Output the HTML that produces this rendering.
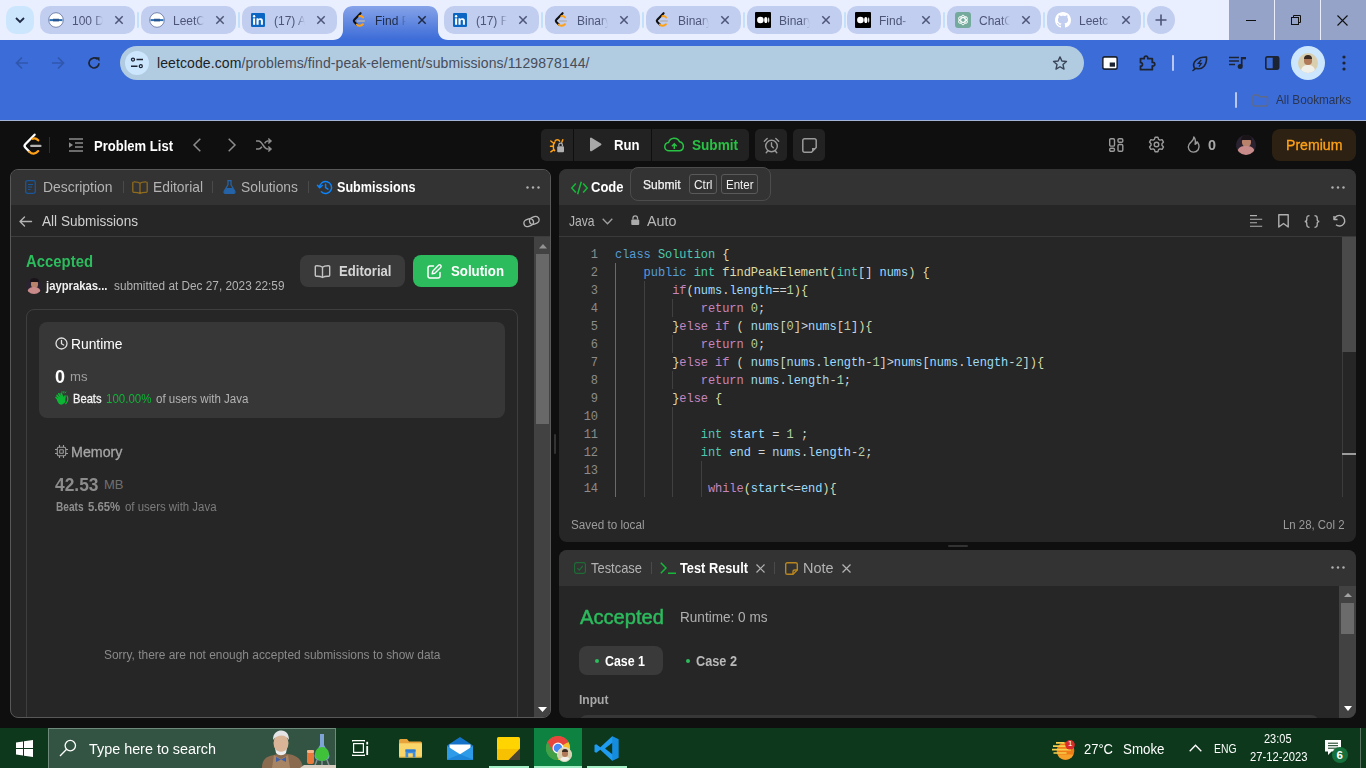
<!DOCTYPE html>
<html lang="en">
<head>
<meta charset="utf-8">
<title>Find Peak Element - LeetCode</title>
<style>
*{box-sizing:border-box;margin:0;padding:0}
html,body{width:1366px;height:768px;overflow:hidden;background:#0f0f0f}
body{position:relative;font-family:"Liberation Sans",sans-serif;color:#f5f5f5;font-size:14px}
.abs{position:absolute}
.t{position:absolute;white-space:nowrap;line-height:1}
svg{position:absolute;overflow:visible}
/* chrome */
#tabstrip{position:absolute;left:0;top:0;width:1366px;height:40px;background:#e9efff}
.tab{position:absolute;top:6px;width:95px;height:28px;border-radius:10px;background:#c2cef0}
.tab .ttl{position:absolute;left:32px;top:8px;font-size:12px;color:#4d5677;white-space:nowrap;width:31px;overflow:hidden;line-height:15px;-webkit-mask-image:linear-gradient(90deg,#000 72%,transparent 100%);mask-image:linear-gradient(90deg,#000 72%,transparent 100%)}
.tab .x{position:absolute;left:72px;top:9px;width:10px;height:10px}
.tsep{position:absolute;top:12px;width:2px;height:16px;background:#c3e1fa;border-radius:1px}
#toolbar{position:absolute;left:0;top:40px;width:1366px;height:80px;background:#3c6cd8}
#wc{position:absolute;left:1229px;top:0;width:137px;height:40px;background:#95a3c8}

/* leetcode */
.g{color:#2cbb5d}
.btn{position:absolute;top:129px;height:32px;background:#222}
.sep{position:absolute;width:1px;height:12px;background:#4a4a4a}

.panel{position:absolute;background:#262626;border-radius:8px;overflow:hidden}
.phead{position:absolute;left:0;top:0;right:0;height:36px;background:#333}

.code{position:absolute;left:615px;white-space:pre;font-family:"Liberation Mono",monospace;font-size:12px;letter-spacing:-.054px;line-height:18px;height:18px;color:#d4d4d4}
.ln{position:absolute;left:560px;width:38px;text-align:right;font-family:"Liberation Mono",monospace;font-size:12px;letter-spacing:-.054px;line-height:18px;height:18px;color:#8c8c8c}
.k{color:#569cd6}.ty{color:#4ec9b0}.c{color:#c586c0}.v{color:#9cdcfe}.f{color:#dcdcaa}.n{color:#b5cea8}.b{color:#dcdcaa}
.ig{position:absolute;width:1px;background:#404040}
</style>
</head>
<body>
<div id="tabstrip">
<div class="abs" style="left:6px;top:6px;width:28px;height:28px;border-radius:10px;background:#cce6fd"></div>
<svg width="10" height="6" viewBox="0 0 10 6" style="left:15px;top:17px"><path d="M1 1l4 4 4-4" fill="none" stroke="#1f2a44" stroke-width="1.800"/></svg>
<div class="tab" style="left:40px"><svg width="16" height="16" viewBox="0 0 16 16" style="left:8px;top:6px"><circle cx="8" cy="8" r="7.3" fill="#fff" stroke="#5b6f9a" stroke-width="0.8"/><rect x="1.5" y="7.1" width="13" height="2" fill="#2d6fb3"/><rect x="5" y="6.6" width="6" height="3" fill="#1f3f77" opacity=".55"/></svg><span class="ttl">100 D</span><svg class="x" viewBox="0 0 10 10" style="left:74px;top:9px" width="10" height="10"><path d="M1.300 1.300l7.400 7.400M8.700 1.300l-7.400 7.400" stroke="#4d5677" stroke-width="1.500" fill="none"/></svg></div>
<div class="tsep" style="left:137px"></div>
<div class="tab" style="left:141px"><svg width="16" height="16" viewBox="0 0 16 16" style="left:8px;top:6px"><circle cx="8" cy="8" r="7.3" fill="#fff" stroke="#5b6f9a" stroke-width="0.8"/><rect x="1.5" y="7.1" width="13" height="2" fill="#2d6fb3"/><rect x="5" y="6.6" width="6" height="3" fill="#1f3f77" opacity=".55"/></svg><span class="ttl">LeetC</span><svg class="x" viewBox="0 0 10 10" style="left:74px;top:9px" width="10" height="10"><path d="M1.300 1.300l7.400 7.400M8.700 1.300l-7.400 7.400" stroke="#4d5677" stroke-width="1.500" fill="none"/></svg></div>
<div class="tsep" style="left:238px"></div>
<div class="tab" style="left:242px"><svg width="14" height="14" viewBox="0 0 16 16" style="left:9px;top:7px"><rect width="16" height="16" rx="1.5" fill="#0a66c2"/><rect x="2.4" y="6.1" width="2.3" height="7.4" fill="#fff"/><circle cx="3.55" cy="3.7" r="1.35" fill="#fff"/><path d="M6.3 6.1h2.2v1c.4-.7 1.2-1.2 2.4-1.2 2.2 0 2.7 1.400 2.700 3.300v4.300h-2.300v-3.800c0-.9 0-1.900-1.200-1.900s-1.400.9-1.400 1.900v3.800H6.300z" fill="#fff"/></svg><span class="ttl">(17) A</span><svg class="x" viewBox="0 0 10 10" style="left:74px;top:9px" width="10" height="10"><path d="M1.300 1.300l7.400 7.400M8.700 1.300l-7.400 7.400" stroke="#4d5677" stroke-width="1.500" fill="none"/></svg></div>
<svg width="116" height="34" viewBox="0 0 116 34" style="left:333px;top:6px"><defs><linearGradient id="ag" x1="0" y1="0" x2="0" y2="1"><stop offset="0" stop-color="#86a3e9"/><stop offset="1" stop-color="#3c6cd8"/></linearGradient></defs><path d="M0 34C6 34 10 30 10 24V10C10 4 14 0 20 0H95C101 0 105 4 105 10V24C105 30 109 34 115 34Z" fill="url(#ag)"/></svg>
<div class="tab" style="left:343px;background:none"><svg width="16" height="16" viewBox="0 0 16 16" style="left:8px;top:6px"><path d="M9.600 1.200 3.300 7.800a1.500 1.500 0 0 0 0 2.100l2.600 2.700" fill="none" stroke="#111" stroke-width="2.100" stroke-linecap="round"/><path d="M8.400 4.300c1.400-.5 2.600 0 3.600 1.100M5.900 12.600c1.700 1.800 4.300 1.500 6-.3" fill="none" stroke="#ffa116" stroke-width="2" stroke-linecap="round"/><path d="M6.700 9h6.600" stroke="#b3b3b3" stroke-width="1.600" stroke-linecap="round"/></svg><span class="ttl" style="color:#1f2a44">Find P</span><svg class="x" viewBox="0 0 10 10" style="left:74px;top:9px" width="10" height="10"><path d="M1.300 1.300l7.400 7.400M8.700 1.300l-7.400 7.400" stroke="#1f2a44" stroke-width="1.500" fill="none"/></svg></div>
<div class="tab" style="left:444px"><svg width="14" height="14" viewBox="0 0 16 16" style="left:9px;top:7px"><rect width="16" height="16" rx="1.5" fill="#0a66c2"/><rect x="2.4" y="6.1" width="2.3" height="7.4" fill="#fff"/><circle cx="3.55" cy="3.7" r="1.35" fill="#fff"/><path d="M6.3 6.1h2.2v1c.4-.7 1.2-1.2 2.4-1.2 2.2 0 2.7 1.400 2.700 3.300v4.300h-2.300v-3.800c0-.9 0-1.900-1.200-1.900s-1.400.9-1.400 1.900v3.800H6.300z" fill="#fff"/></svg><span class="ttl">(17) F</span><svg class="x" viewBox="0 0 10 10" style="left:74px;top:9px" width="10" height="10"><path d="M1.300 1.300l7.400 7.400M8.700 1.300l-7.400 7.400" stroke="#4d5677" stroke-width="1.500" fill="none"/></svg></div>
<div class="tsep" style="left:541px"></div>
<div class="tab" style="left:545px"><svg width="16" height="16" viewBox="0 0 16 16" style="left:8px;top:6px"><path d="M9.600 1.200 3.300 7.800a1.500 1.500 0 0 0 0 2.100l2.600 2.700" fill="none" stroke="#111" stroke-width="2.100" stroke-linecap="round"/><path d="M8.400 4.300c1.400-.5 2.600 0 3.600 1.100M5.900 12.600c1.700 1.800 4.300 1.500 6-.3" fill="none" stroke="#ffa116" stroke-width="2" stroke-linecap="round"/><path d="M6.700 9h6.600" stroke="#b3b3b3" stroke-width="1.600" stroke-linecap="round"/></svg><span class="ttl">Binary</span><svg class="x" viewBox="0 0 10 10" style="left:74px;top:9px" width="10" height="10"><path d="M1.300 1.300l7.400 7.400M8.700 1.300l-7.400 7.400" stroke="#4d5677" stroke-width="1.500" fill="none"/></svg></div>
<div class="tsep" style="left:642px"></div>
<div class="tab" style="left:646px"><svg width="16" height="16" viewBox="0 0 16 16" style="left:8px;top:6px"><path d="M9.600 1.200 3.300 7.800a1.500 1.500 0 0 0 0 2.100l2.600 2.700" fill="none" stroke="#111" stroke-width="2.100" stroke-linecap="round"/><path d="M8.400 4.300c1.400-.5 2.600 0 3.600 1.100M5.900 12.600c1.700 1.800 4.300 1.500 6-.3" fill="none" stroke="#ffa116" stroke-width="2" stroke-linecap="round"/><path d="M6.700 9h6.600" stroke="#b3b3b3" stroke-width="1.600" stroke-linecap="round"/></svg><span class="ttl">Binary</span><svg class="x" viewBox="0 0 10 10" style="left:74px;top:9px" width="10" height="10"><path d="M1.300 1.300l7.400 7.400M8.700 1.300l-7.400 7.400" stroke="#4d5677" stroke-width="1.500" fill="none"/></svg></div>
<div class="tsep" style="left:743px"></div>
<div class="tab" style="left:747px"><svg width="16" height="16" viewBox="0 0 16 16" style="left:8px;top:6px"><rect width="16" height="16" rx="1" fill="#000"/><circle cx="5.400" cy="8" r="3.300" fill="#fff"/><ellipse cx="10.800" cy="8" rx="1.650" ry="3.100" fill="#fff"/><ellipse cx="13.700" cy="8" rx=".6" ry="2.800" fill="#fff"/></svg><span class="ttl">Binary</span><svg class="x" viewBox="0 0 10 10" style="left:74px;top:9px" width="10" height="10"><path d="M1.300 1.300l7.400 7.400M8.700 1.300l-7.400 7.400" stroke="#4d5677" stroke-width="1.500" fill="none"/></svg></div>
<div class="tsep" style="left:844px"></div>
<div class="tab" style="left:847px;width:94px"><svg width="16" height="16" viewBox="0 0 16 16" style="left:8px;top:6px"><rect width="16" height="16" rx="1" fill="#000"/><circle cx="5.400" cy="8" r="3.300" fill="#fff"/><ellipse cx="10.800" cy="8" rx="1.650" ry="3.100" fill="#fff"/><ellipse cx="13.700" cy="8" rx=".6" ry="2.800" fill="#fff"/></svg><span class="ttl">Find-</span><svg class="x" viewBox="0 0 10 10" style="left:74px;top:9px" width="10" height="10"><path d="M1.300 1.300l7.400 7.400M8.700 1.300l-7.400 7.400" stroke="#4d5677" stroke-width="1.500" fill="none"/></svg></div>
<div class="tsep" style="left:943px"></div>
<div class="tab" style="left:947px;width:94px"><svg width="16" height="16" viewBox="0 0 16 16" style="left:8px;top:6px"><rect width="16" height="16" rx="3" fill="#74aa9c"/><g fill="none" stroke="#fff" stroke-width=".9"><ellipse cx="8" cy="8" rx="2.200" ry="4.800"/><ellipse cx="8" cy="8" rx="2.200" ry="4.800" transform="rotate(60 8 8)"/><ellipse cx="8" cy="8" rx="2.200" ry="4.800" transform="rotate(120 8 8)"/></g></svg><span class="ttl">ChatG</span><svg class="x" viewBox="0 0 10 10" style="left:74px;top:9px" width="10" height="10"><path d="M1.300 1.300l7.400 7.400M8.700 1.300l-7.400 7.400" stroke="#4d5677" stroke-width="1.500" fill="none"/></svg></div>
<div class="tsep" style="left:1043px"></div>
<div class="tab" style="left:1047px;width:94px"><svg width="16" height="16" viewBox="0 0 16 16" style="left:8px;top:6px"><path fill="#fff" d="M8 0C3.580 0 0 3.580 0 8c0 3.540 2.290 6.530 5.470 7.590.4.070.55-.17.550-.38 0-.19-.01-.82-.01-1.490-2.010.37-2.530-.49-2.690-.94-.09-.23-.48-.94-.82-1.130-.28-.15-.68-.52-.01-.53.630-.01 1.080.58 1.230.82.720 1.210 1.870.87 2.330.66.070-.52.280-.87.510-1.070-1.780-.2-3.640-.89-3.640-3.950 0-.87.310-1.590.82-2.150-.08-.2-.36-1.020.08-2.120 0 0 .67-.21 2.200.82.640-.18 1.320-.27 2-.27s1.360.09 2 .27c1.530-1.040 2.200-.82 2.200-.82.440 1.100.16 1.920.08 2.120.51.560.82 1.270.82 2.150 0 3.070-1.870 3.750-3.650 3.950.29.250.54.730.54 1.480 0 1.070-.01 1.930-.01 2.200 0 .21.150.46.550.38A8.010 8.010 0 0 0 16 8c0-4.420-3.580-8-8-8z"/></svg><span class="ttl">Leetc</span><svg class="x" viewBox="0 0 10 10" style="left:74px;top:9px" width="10" height="10"><path d="M1.300 1.300l7.400 7.400M8.700 1.300l-7.400 7.400" stroke="#4d5677" stroke-width="1.500" fill="none"/></svg></div>
<div class="tsep" style="left:1143px"></div>
<div class="abs" style="left:1147px;top:6px;width:28px;height:28px;border-radius:14px;background:#c2cef0"></div>
<svg width="12" height="12" viewBox="0 0 12 12" style="left:1155px;top:14px"><path d="M6 .5v11M.5 6h11" stroke="#4d5677" stroke-width="1.600"/></svg>
</div>
<div id="toolbar">
<!-- nav -->
<svg width="14" height="14" viewBox="0 0 14 14" style="left:15px;top:16px"><path d="M13 7H2M7 1.500 1.500 7 7 12.500" fill="none" stroke="#3157ad" stroke-width="1.700"/></svg>
<svg width="14" height="14" viewBox="0 0 14 14" style="left:51px;top:16px"><path d="M1 7h11M7 1.500 12.500 7 7 12.500" fill="none" stroke="#3157ad" stroke-width="1.700"/></svg>
<svg width="14" height="14" viewBox="0 0 14 14" style="left:87px;top:16px"><path d="M12 7.300A5 5 0 1 1 10.300 3.200" fill="none" stroke="#1c2433" stroke-width="1.700"/><path d="M8.200 1.200h4.300v4.300z" fill="#1c2433"/></svg>
<div class="abs" style="left:120px;top:6px;width:964px;height:34px;border-radius:17px;background:#b1cbe1"></div>
<div class="abs" style="left:125px;top:11px;width:24px;height:24px;border-radius:12px;background:#cce6fd"></div>
<svg width="14" height="12" viewBox="0 0 14 12" style="left:130px;top:17px"><circle cx="3" cy="2.600" r="1.500" fill="none" stroke="#1c2433" stroke-width="1.300"/><path d="M6.500 2.600H13M1 9.200h6.500" stroke="#1c2433" stroke-width="1.500"/><circle cx="10.800" cy="9.200" r="1.500" fill="none" stroke="#1c2433" stroke-width="1.300"/></svg>
<div class="t" style="left:157px;top:16px;font-size:14px;color:#474d59;letter-spacing:.1px"><span style="color:#1b1f27">leetcode.com</span>/problems/find-peak-element/submissions/1129878144/</div>
<!-- star -->
<svg width="16" height="16" viewBox="0 0 24 24" style="left:1052px;top:15px"><path d="M12 2.800l2.800 6.300 6.900.7-5.200 4.600 1.500 6.800-6-3.600-6 3.600 1.500-6.800-5.200-4.600 6.900-.7z" fill="none" stroke="#3b4558" stroke-width="2.100" stroke-linejoin="round"/></svg>
<!-- pip -->
<svg width="16" height="14" viewBox="0 0 17 14" preserveAspectRatio="none" style="left:1102px;top:16px"><rect x=".9" y=".9" width="15.200" height="12.200" rx="1.800" fill="#fff" stroke="#1c2433" stroke-width="1.600"/><rect x="8.200" y="6.500" width="5.600" height="4.200" fill="#1c2433"/></svg>
<!-- ext -->
<svg width="17" height="17" viewBox="0 0 17 17" style="left:1138.500px;top:14px"><path d="M1.500 4.700h3.700c-.7-3.500 4.300-3.500 3.600 0H13.300v3.700c3.300-.6 3.300 4.200 0 3.600V15.700H1.500v-3.500c2.600.4 2.600-3.900 0-3.500z" fill="none" stroke="#1c2433" stroke-width="1.800" stroke-linejoin="round"/></svg>
<div class="abs" style="left:1172px;top:15px;width:2px;height:16px;background:#b9c7ee;border-radius:1px"></div>
<!-- leaf -->
<svg width="18" height="18" viewBox="0 0 18 18" style="left:1191px;top:14px"><path d="M3.200 13.800C1 8 6 3 15.500 3c.5 8-4 13.500-10.800 11.300L2 16.500" fill="none" stroke="#1c2433" stroke-width="1.600" stroke-linejoin="round" stroke-linecap="round"/><path d="M10.300 5.800 7.300 9.300h3l-2.300 3.400" fill="none" stroke="#1c2433" stroke-width="1.300"/></svg>
<!-- media -->
<svg width="17" height="14" viewBox="0 0 17 14" style="left:1229px;top:16px"><path d="M0 1.500h10M0 5h10M0 8.500h6" stroke="#1c2433" stroke-width="1.700"/><path d="M12.700 1v9" stroke="#1c2433" stroke-width="1.700"/><path d="M12 1h5v2.300h-5z" fill="#1c2433"/><circle cx="11.200" cy="10.500" r="2.500" fill="#1c2433"/></svg>
<!-- side panel -->
<svg width="14.500" height="14" viewBox="0 0 16 14" preserveAspectRatio="none" style="left:1265px;top:16px"><rect x=".9" y=".9" width="14.200" height="12.200" rx="1.500" fill="none" stroke="#1c2433" stroke-width="1.800"/><rect x="8.500" y="1" width="6.500" height="12" fill="#1c2433"/></svg>
<!-- avatar -->
<div class="abs" style="left:1291px;top:6px;width:34px;height:34px;border-radius:17px;background:#cce6fd"></div>
<div class="abs" style="left:1298px;top:13px;width:20px;height:20px;border-radius:10px;background:#d9cfae;overflow:hidden"><div class="abs" style="left:6px;top:3px;width:8px;height:9px;border-radius:4px;background:#b07a5a"></div><div class="abs" style="left:6px;top:2px;width:8px;height:4px;border-radius:4px 4px 0 0;background:#3a2a22"></div><div class="abs" style="left:3px;top:12px;width:14px;height:10px;border-radius:6px 6px 0 0;background:#f1efea"></div></div>
<svg width="4" height="16" viewBox="0 0 4 16" style="left:1342px;top:15px"><circle cx="2" cy="2" r="1.600" fill="#1c2433"/><circle cx="2" cy="8" r="1.600" fill="#1c2433"/><circle cx="2" cy="14" r="1.600" fill="#1c2433"/></svg>
<!-- bookmarks -->
<div class="abs" style="left:1235px;top:52px;width:2px;height:16px;background:#b9c7ee;border-radius:1px"></div>
<svg width="16" height="13" viewBox="0 0 16 13" style="left:1252px;top:54px"><path d="M1 2.500a1.500 1.500 0 0 1 1.500-1.500h3.500l1.800 1.800h6.200a1.500 1.500 0 0 1 1.500 1.500v6.200a1.500 1.500 0 0 1-1.500 1.500h-11.500a1.500 1.500 0 0 1-1.500-1.500z" fill="none" stroke="#5f6a86" stroke-width="1.500"/></svg>
<div class="t" style="transform:scaleX(0.9780);transform-origin:0 50%;left:1276px;top:54px;font-size:12px;color:#2a3550">All Bookmarks</div>
</div>
<div class="abs" style="left:0;top:120px;width:1366px;height:1px;background:#a3b4d6"></div>
<div id="wc">
<div class="abs" style="left:45px;top:0;width:1px;height:40px;background:#e9efff"></div>
<div class="abs" style="left:91px;top:0;width:1px;height:40px;background:#e9efff"></div>
<svg width="10" height="1" style="left:17px;top:20px"><rect width="10" height="1" fill="#111"/></svg>
<svg width="10" height="10" viewBox="0 0 10 10" style="left:62px;top:15px"><path d="M2.500 2.500V.5h7v7h-2" fill="none" stroke="#111" stroke-width="1"/><rect x=".5" y="2.500" width="7" height="7" fill="none" stroke="#111" stroke-width="1"/></svg>
<svg width="11" height="11" viewBox="0 0 11 11" style="left:108px;top:15px"><path d="M.5.500l10 10M10.500.500l-10 10" stroke="#111" stroke-width="1.100"/></svg>
</div>

<!-- ===== LeetCode navbar ===== -->
<svg width="19" height="22" viewBox="0 0 19 22" style="left:23px;top:133px"><path d="M11.600 1.700 2.300 11.300a2.300 2.300 0 0 0 0 3.200l4.100 4.200" fill="none" stroke="#fff" stroke-width="2.300" stroke-linecap="round"/><path d="M9.800 5.700c2-.8 4 0 5.400 1.600M6.400 18.700c2.700 2.800 6.300 2.300 8.800-.6" fill="none" stroke="#ffa116" stroke-width="2.300" stroke-linecap="round"/><path d="M8.200 12.900h9.300" stroke="#b3b3b3" stroke-width="2.200" stroke-linecap="round"/></svg>
<div class="abs" style="left:49px;top:137px;width:1px;height:16px;background:#2e2e2e"></div>
<svg width="14" height="14" viewBox="0 0 14 14" style="left:69px;top:138px"><path d="M0 1h14M6 5h8M6 9h8M0 13h14" stroke="#8c8c8c" stroke-width="1.700"/><path d="M0 4.200 4 7 0 9.800z" fill="#8c8c8c"/></svg>
<div class="t" style="transform:scaleX(0.8695);transform-origin:0 50%;left:94px;top:138px;font-size:15px;font-weight:700;color:#fff">Problem List</div>
<svg width="8" height="14" viewBox="0 0 8 14" style="left:193px;top:138px"><path d="M7.300.700 1 7l6.300 6.300" fill="none" stroke="#8c8c8c" stroke-width="1.500"/></svg>
<svg width="8" height="14" viewBox="0 0 8 14" style="left:228px;top:138px"><path d="M.7.700 7 7 .7 13.300" fill="none" stroke="#8c8c8c" stroke-width="1.500"/></svg>
<svg width="16" height="14" viewBox="0 0 16 14" style="left:256px;top:138px"><path d="M0 3h2.500c4 0 5 8 9 8H15M0 11h2.500c1.500 0 2.500-1 3.400-2.300M8.600 5.300C9.400 4 10.300 3 11.500 3H15M12.300.500 15 3l-2.700 2.500M12.300 8.500 15 11l-2.700 2.500" fill="none" stroke="#8c8c8c" stroke-width="1.500"/></svg>
<!-- center buttons -->
<div class="btn" style="left:541px;width:32px;border-radius:5px 0 0 5px"></div>
<div class="btn" style="left:574px;width:77px"></div>
<div class="btn" style="left:652px;width:97px;border-radius:0 5px 5px 0"></div>
<div class="btn" style="left:755px;width:32px;border-radius:5px"></div>
<div class="btn" style="left:793px;width:32px;border-radius:5px"></div>
<svg width="15" height="15" viewBox="0 0 15 15" style="left:550px;top:138px"><g fill="none" stroke="#ffa116" stroke-width="1.500" stroke-linecap="round"><path d="M5 3.200a2.600 2.600 0 0 1 4.600 0"/><path d="M4.600 4.600c-1.800 1.500-1.800 6.400 0 8"/><path d="M.8 3l2.600 2M.5 8.300h3M.8 13.800l2.800-2M12.800 1.800l-1 2.400"/></g><rect x="7.200" y="8.300" width="6.800" height="6" rx="1" fill="#b0b0b0"/><path d="M8.800 8.300V7a1.800 1.800 0 0 1 3.600 0v1.300" fill="none" stroke="#b0b0b0" stroke-width="1.300"/></svg>
<svg width="13" height="15" viewBox="0 0 13 15" style="left:588.600px;top:137.200px"><path d="M1 1.600a1 1 0 0 1 1.500-.9l9.400 5.900a1 1 0 0 1 0 1.700l-9.400 5.900a1 1 0 0 1-1.500-.9z" fill="#a8a8a8"/></svg>
<div class="t" style="transform:scaleX(0.9047);transform-origin:0 50%;left:614px;top:138px;font-size:14.500px;font-weight:700;color:#fff">Run</div>
<svg width="21" height="15" viewBox="0 0 21 15" style="left:663.500px;top:137.300px"><path d="M5.200 13.800a4.200 4.200 0 0 1-.5-8.400 5.700 5.700 0 0 1 10.800-.6 4.600 4.600 0 0 1 .3 9z" fill="none" stroke="#28c244" stroke-width="1.500" stroke-linejoin="round"/><path d="M10.300 12V7M7.900 9.200l2.400-2.400 2.400 2.400" fill="none" stroke="#28c244" stroke-width="1.500"/></svg>
<div class="t" style="transform:scaleX(0.9361);transform-origin:0 50%;left:691.500px;top:138px;font-size:14.500px;font-weight:700;color:#28c244">Submit</div>
<svg width="17" height="17" viewBox="0 0 17 17" style="left:762.500px;top:136.500px"><g fill="none" stroke="#9a9a9a" stroke-width="1.400" stroke-linecap="round"><circle cx="8.500" cy="9" r="5.800"/><path d="M8.500 5.800V9l1.800 1.800M1.300 4.200 4.200 1.500M15.700 4.200 12.800 1.500M3.200 15.800l1.500-1.800M13.800 15.800l-1.500-1.800"/></g></svg>
<svg width="15" height="15" viewBox="0 0 15 15" style="left:801.500px;top:137.500px"><path d="M2.500.800h10a1.700 1.700 0 0 1 1.700 1.700v7l-4.700 4.700h-7a1.700 1.700 0 0 1-1.700-1.700v-10a1.700 1.700 0 0 1 1.700-1.700z" fill="none" stroke="#9a9a9a" stroke-width="1.500"/><path d="M14 10H10v4z" fill="#9a9a9a"/></svg>
<!-- right -->
<svg width="15" height="14" viewBox="0 0 15 14" style="left:1108.800px;top:138px"><g fill="none" stroke="#9a9a9a" stroke-width="1.400"><rect x=".7" y=".7" width="4.800" height="7.400" rx="1.200"/><rect x="9" y=".7" width="4.800" height="3.600" rx="1.200"/><rect x=".7" y="10.300" width="4.800" height="3" rx="1.200"/><rect x="9" y="6.500" width="4.800" height="6.800" rx="1.200"/></g></svg>
<svg width="17" height="17" viewBox="0 0 17 17" style="left:1147.500px;top:136.300px"><g fill="none" stroke="#9a9a9a" stroke-width="1.400" stroke-linejoin="round"><circle cx="8.500" cy="8.500" r="2.300"/><path d="M6.44 3.40 L7.09 1.24 L9.91 1.24 L10.56 3.40 L11.89 4.17 L14.08 3.65 L15.50 6.09 L13.95 7.73 L13.95 9.27 L15.50 10.91 L14.08 13.35 L11.89 12.83 L10.56 13.60 L9.91 15.76 L7.09 15.76 L6.44 13.60 L5.11 12.83 L2.92 13.35 L1.50 10.91 L3.05 9.27 L3.05 7.73 L1.50 6.09 L2.92 3.65 L5.11 4.17Z"/></g></svg>
<svg width="15" height="17" viewBox="0 0 15 17" style="left:1185.800px;top:136px"><path d="M7.800.900c.6 3.300-3 4.600-4.800 7.600-1.800 3.200.2 7.600 4.500 7.600s6.400-3.800 5.300-7.400c-.5-1.400-1.200-2.300-1.800-2.900-.300 1.500-1 2.300-1.900 2.600C9.700 5.400 9.300 2.600 7.800.900z" fill="none" stroke="#9a9a9a" stroke-width="1.400" stroke-linejoin="round"/></svg>
<div class="t" style="transform:scaleX(1.0261);transform-origin:0 50%;left:1207.800px;top:138px;font-size:14px;font-weight:700;color:#a8a8a8">0</div>
<div class="abs" style="left:1236px;top:135px;width:20px;height:20px;border-radius:10px;background:#2a2230;overflow:hidden"><div class="abs" style="left:6px;top:2px;width:9px;height:10px;border-radius:5px;background:#b9826a"></div><div class="abs" style="left:1px;top:11px;width:18px;height:12px;border-radius:7px 7px 0 0;background:#c98a8a"></div><div class="abs" style="left:5px;top:0;width:11px;height:5px;border-radius:5px 5px 0 0;background:#1a1418"></div></div>
<div class="abs" style="left:1272px;top:129px;width:84px;height:32px;border-radius:8px;background:#2d2114"></div>
<div class="t" style="transform:scaleX(0.9414);transform-origin:0 50%;left:1286px;top:136.800px;font-size:15px;color:#ffa116;font-weight:400;-webkit-text-stroke:.35px #ffa116">Premium</div>

<!-- ===== Left panel ===== -->
<div class="panel" style="left:10px;top:169px;width:541px;height:549px;border:1px solid #585858">
<div class="phead" style="height:35px"></div>
<div class="abs" style="left:0;top:66px;width:539px;height:1px;background:#3c3c3c"></div>
<!-- scrollbar -->
<div class="abs" style="left:523px;top:67px;width:17px;height:481px;background:#424242"></div>
<div class="abs" style="left:525px;top:84px;width:13px;height:170px;background:#686868"></div>
<svg width="8" height="4.500" viewBox="0 0 9 5" style="left:527.500px;top:73.700px"><path d="M0 5 4.500 0 9 5z" fill="#939393"/></svg>
<svg width="9" height="5" viewBox="0 0 9 5" style="left:527px;top:537px"><path d="M0 0 4.500 5 9 0z" fill="#fff"/></svg>
<!-- card -->
<div class="abs" style="left:15px;top:139px;width:492px;height:420px;border:1px solid #3e3e3e;border-radius:8px"></div>
<div class="abs" style="left:28px;top:152px;width:466px;height:96px;border-radius:8px;background:#373737"></div>
<!-- buttons -->
<div class="abs" style="left:289px;top:85px;width:105px;height:32px;border-radius:8px;background:#3a3a3a"></div>
<div class="abs" style="left:402px;top:85px;width:105px;height:32px;border-radius:8px;background:#2cbb5d"></div>
</div>
<!-- tabs -->
<svg width="11" height="14" viewBox="0 0 11 14" style="left:24.500px;top:180px"><rect x=".7" y=".7" width="9.600" height="12.600" rx="1.800" fill="none" stroke="#1a5699" stroke-width="1.300"/><path d="M3 4.500h5M3 7h4M3 9.500h2.500" stroke="#1a5699" stroke-width="1.100"/></svg>
<div class="t" style="transform:scaleX(0.9582);transform-origin:0 50%;left:42.500px;top:180px;font-size:14.500px;color:#b3b3b3">Description</div>
<div class="sep" style="left:123px;top:181px"></div>
<svg width="16" height="13" viewBox="0 0 16 13" style="left:132px;top:181px"><path d="M8 2.300C6.500 1 4.200.700 1.800.800a1 1 0 0 0-1 1v8.500a1 1 0 0 0 1 1C4 11.200 6.300 11.400 8 12.500c1.700-1.100 4-1.300 6.200-1.200a1 1 0 0 0 1-1V1.800a1 1 0 0 0-1-1C11.800.700 9.500 1 8 2.300zV12" fill="none" stroke="#8f6b1e" stroke-width="1.300" stroke-linejoin="round"/></svg>
<div class="t" style="transform:scaleX(0.9544);transform-origin:0 50%;left:152.500px;top:180px;font-size:14.500px;color:#b3b3b3">Editorial</div>
<div class="sep" style="left:212px;top:181px"></div>
<svg width="13" height="14" viewBox="0 0 13 14" style="left:222.500px;top:180px"><path d="M4.300.700h4.400M5 .7v4L1.200 11.300A1.300 1.300 0 0 0 2.400 13.300h8.200a1.300 1.300 0 0 0 1.200-2L8 4.700V.7" fill="none" stroke="#2563a8" stroke-width="1.300" stroke-linejoin="round"/><path d="M3.300 8h6.400l2 3.500a1 1 0 0 1-.9 1.500H2.200a1 1 0 0 1-.9-1.500z" fill="#2563a8"/></svg>
<div class="t" style="transform:scaleX(0.9555);transform-origin:0 50%;left:240.500px;top:180px;font-size:14.500px;color:#b3b3b3">Solutions</div>
<div class="sep" style="left:308px;top:181px"></div>
<svg width="16" height="15" viewBox="0 0 16 15" style="left:316.500px;top:179.500px"><path d="M2.600 7.500a6 6 0 1 1 1.800 4.300" fill="none" stroke="#0a84ff" stroke-width="1.500" stroke-linecap="round"/><path d="M.5 5.200l2.200 2.500 2.500-2.200" fill="none" stroke="#0a84ff" stroke-width="1.500" stroke-linecap="round" stroke-linejoin="round"/><path d="M8.600 4.300v3.400l2.300 1.400" fill="none" stroke="#0a84ff" stroke-width="1.500" stroke-linecap="round"/></svg>
<div class="t" style="transform:scaleX(0.8698);transform-origin:0 50%;left:337px;top:180px;font-size:14.500px;font-weight:700;color:#fff">Submissions</div>
<svg width="14" height="3" viewBox="0 0 14 3" style="left:526px;top:185.500px"><circle cx="1.500" cy="1.500" r="1.200" fill="#b0b0b0"/><circle cx="7" cy="1.500" r="1.200" fill="#b0b0b0"/><circle cx="12.500" cy="1.500" r="1.200" fill="#b0b0b0"/></svg>
<!-- all submissions row -->
<svg width="13" height="11" viewBox="0 0 13 11" style="left:18.800px;top:215.500px"><path d="M12.500 5.500H1M5.500 1 1 5.500 5.500 10" fill="none" stroke="#b3b3b3" stroke-width="1.400" stroke-linecap="round" stroke-linejoin="round"/></svg>
<div class="t" style="transform:scaleX(0.9380);transform-origin:0 50%;left:42px;top:214px;font-size:14.500px;color:#d0d0d0">All Submissions</div>
<svg width="17" height="13" viewBox="0 0 17 13" style="left:522.500px;top:214.500px"><g fill="none" stroke="#b3b3b3" stroke-width="1.400" transform="rotate(-22 8.500 6.500)"><rect x=".6" y="3" width="9.800" height="7" rx="3.500"/><rect x="6.600" y="3" width="9.800" height="7" rx="3.500"/></g></svg>
<!-- accepted header -->
<div class="t" style="transform:scaleX(0.8755);transform-origin:0 50%;left:26px;top:253px;font-size:17px;font-weight:700;color:#2cbb5d">Accepted</div>
<div class="abs" style="left:26px;top:278px;width:16px;height:16px;border-radius:8px;background:#2a2230;overflow:hidden"><div class="abs" style="left:5px;top:2px;width:7px;height:8px;border-radius:4px;background:#b9826a"></div><div class="abs" style="left:1px;top:9px;width:14px;height:9px;border-radius:6px 6px 0 0;background:#c98a8a"></div><div class="abs" style="left:4px;top:0;width:9px;height:4px;border-radius:4px 4px 0 0;background:#1a1418"></div></div>
<div class="t" style="transform:scaleX(0.9030);transform-origin:0 50%;left:45.500px;top:280px;font-size:12.500px;font-weight:700;color:#f0f0f0">jayprakas...</div>
<div class="t" style="transform:scaleX(0.9436);transform-origin:0 50%;left:114px;top:280px;font-size:12.500px;color:#b3b3b3">submitted at Dec 27, 2023 22:59</div>
<svg width="17" height="13" viewBox="0 0 16 13" style="left:314px;top:265px"><path d="M8 2.300C6.500 1 4.200.700 1.800.800a1 1 0 0 0-1 1v8.500a1 1 0 0 0 1 1C4 11.200 6.300 11.400 8 12.500c1.700-1.100 4-1.300 6.200-1.200a1 1 0 0 0 1-1V1.800a1 1 0 0 0-1-1C11.800.700 9.500 1 8 2.300zV12" fill="none" stroke="#c4c4c4" stroke-width="1.400" stroke-linejoin="round"/></svg>
<div class="t" style="transform:scaleX(0.9049);transform-origin:0 50%;left:338.500px;top:264px;font-size:14.500px;font-weight:700;color:#d6d6d6">Editorial</div>
<svg width="15" height="15" viewBox="0 0 15 15" style="left:427px;top:263.500px"><path d="M6.500 2H3a2 2 0 0 0-2 2v8a2 2 0 0 0 2 2h8a2 2 0 0 0 2-2V8.500" fill="none" stroke="#fff" stroke-width="1.500" stroke-linecap="round"/><path d="M11.500 1.200a1.400 1.400 0 0 1 2.200 2.200L7.800 9.300 5.200 9.800l.5-2.600z" fill="none" stroke="#fff" stroke-width="1.400" stroke-linejoin="round"/></svg>
<div class="t" style="transform:scaleX(0.9138);transform-origin:0 50%;left:451px;top:264px;font-size:14.500px;font-weight:700;color:#fff">Solution</div>
<!-- runtime -->
<svg width="13" height="13" viewBox="0 0 13 13" style="left:54.500px;top:337px"><circle cx="6.500" cy="6.500" r="5.500" fill="none" stroke="#e0e0e0" stroke-width="1.300"/><path d="M6.500 3.300v3.400l2.200 1.300" fill="none" stroke="#e0e0e0" stroke-width="1.300" stroke-linecap="round"/></svg>
<div class="t" style="transform:scaleX(0.9537);transform-origin:0 50%;left:71px;top:336.500px;font-size:14.500px;color:#fff">Runtime</div>
<div class="t" style="transform:scaleX(0.9712);transform-origin:0 50%;left:55px;top:367.500px;font-size:18.500px;font-weight:700;color:#fff">0</div>
<div class="t" style="transform:scaleX(1.0090);transform-origin:0 50%;left:69.600px;top:370px;font-size:13px;color:#a0a0a0">ms</div>
<svg width="14" height="14" viewBox="0 0 14 14" style="left:54.500px;top:391px"><ellipse cx="6.300" cy="9.300" rx="4" ry="4.200" fill="#0cb534" transform="rotate(-25 6.300 9.300)"/><g stroke="#0cb534" stroke-width="1.700" stroke-linecap="round"><path d="M3.200 9 1.100 6.500M4.300 7.300 2 4.300M6 6.300 3.800 2.800M7.800 6 6.200 2.600M9.600 8.200 10 5"/></g><path d="M12 4.800c1.300 2.600.9 5.600-1.200 7.900" fill="none" stroke="#0cb534" stroke-width="1.200" stroke-linecap="round"/><path d="M7 .6v1.200M8.900.5l-.2 1.300M10.900.9l-.8 1.100" stroke="#0cb534" stroke-width=".9" stroke-linecap="round"/></svg>
<div class="t" style="transform:scaleX(0.8915);transform-origin:0 50%;left:73px;top:392.500px;font-size:12.500px;color:#f4f4f4;-webkit-text-stroke:.3px #f4f4f4">Beats</div>
<div class="t" style="transform:scaleX(0.9218);transform-origin:0 50%;left:106px;top:392.500px;font-size:12.500px;color:#0cb534">100.00%</div>
<div class="t" style="transform:scaleX(0.9246);transform-origin:0 50%;left:156px;top:392.500px;font-size:12.500px;color:#b3b3b3">of users with Java</div>
<!-- memory -->
<svg width="13" height="13" viewBox="0 0 13 13" style="left:54.500px;top:445px"><g fill="none" stroke="#9c9c9c" stroke-width="1.100"><rect x="2.300" y="2.300" width="8.400" height="8.400" rx="1.500"/><rect x="4.700" y="4.700" width="3.600" height="3.600" rx=".5"/><path d="M4.500 0v2.300M8.500 0v2.300M4.500 10.700V13M8.500 10.700V13M0 4.500h2.300M0 8.500h2.300M10.700 4.500H13M10.700 8.500H13"/></g></svg>
<div class="t" style="transform:scaleX(0.9833);transform-origin:0 50%;left:71px;top:444.500px;font-size:14.500px;color:#a6a6a6;-webkit-text-stroke:.3px #a6a6a6">Memory</div>
<div class="t" style="transform:scaleX(0.9396);transform-origin:0 50%;left:55px;top:475.500px;font-size:18.500px;font-weight:700;color:#8c8c8c">42.53</div>
<div class="t" style="transform:scaleX(1.0000);transform-origin:0 50%;left:104px;top:477.800px;font-size:13px;color:#707070">MB</div>
<div class="t" style="transform:scaleX(0.8077);transform-origin:0 50%;left:55.500px;top:501px;font-size:12.500px;font-weight:700;color:#8e8e8e">Beats</div><div class="t" style="transform:scaleX(0.9082);transform-origin:0 50%;left:87.800px;top:501px;font-size:12.500px;font-weight:700;color:#8e8e8e">5.65%</div>
<div class="t" style="transform:scaleX(0.9146);transform-origin:0 50%;left:125px;top:501px;font-size:12.500px;color:#7c7c7c">of users with Java</div>
<div class="t" style="transform:scaleX(0.9539);transform-origin:0 50%;left:103.500px;top:648.500px;font-size:12.500px;color:#8a8a8a">Sorry, there are not enough accepted submissions to show data</div>
<div class="abs" style="left:554px;top:434px;width:2px;height:20px;background:#333;border-radius:1px"></div>

<!-- ===== Code panel ===== -->
<div class="panel" style="left:559px;top:169px;width:797px;height:373px">
<div class="phead"></div>
<div class="abs" style="left:0;top:67px;width:797px;height:1px;background:#3a3a3a"></div>
<!-- editor scrollbar -->
<div class="abs" style="left:783px;top:68px;width:1px;height:260px;background:#3c3c3c"></div>
<div class="abs" style="left:783px;top:68px;width:14px;height:115px;background:#4a4a4a"></div>
<div class="abs" style="left:783px;top:284px;width:14px;height:2px;background:#9c9c9c"></div>
</div>
<svg width="17" height="14" viewBox="0 0 17 14" style="left:570.500px;top:180.500px"><path d="M4.800 2.500.8 7l4 4.500M12.200 2.500l4 4.500-4 4.500M10.300.800 6.600 13.200" fill="none" stroke="#16b83a" stroke-width="1.500"/></svg>
<div class="t" style="transform:scaleX(0.8966);transform-origin:0 50%;left:590.800px;top:180px;font-size:14.500px;font-weight:700;color:#fff">Code</div>
<!-- tooltip -->
<div class="abs" style="left:630px;top:167px;width:141px;height:34px;border-radius:8px;background:#333;border:1px solid #4c4c4c"></div>
<div class="t" style="transform:scaleX(0.9639);transform-origin:0 50%;left:642.500px;top:179px;font-size:12.500px;color:#f2f2f2;-webkit-text-stroke:.25px #f2f2f2">Submit</div>
<div class="abs" style="left:688.500px;top:174px;width:28px;height:20px;border-radius:3px;border:1px solid #5a5a5a"></div>
<div class="t" style="transform:scaleX(0.9510);transform-origin:0 50%;left:693.500px;top:179px;font-size:12.500px;color:#f2f2f2">Ctrl</div>
<div class="abs" style="left:721px;top:174px;width:36.500px;height:20px;border-radius:3px;border:1px solid #5a5a5a"></div>
<div class="t" style="transform:scaleX(0.9200);transform-origin:0 50%;left:725.500px;top:179px;font-size:12.500px;color:#f2f2f2">Enter</div>
<svg width="14" height="3" viewBox="0 0 14 3" style="left:1331px;top:185.500px"><circle cx="1.500" cy="1.500" r="1.200" fill="#b0b0b0"/><circle cx="7" cy="1.500" r="1.200" fill="#b0b0b0"/><circle cx="12.500" cy="1.500" r="1.200" fill="#b0b0b0"/></svg>
<!-- lang row -->
<div class="t" style="transform:scaleX(0.8322);transform-origin:0 50%;left:569px;top:214px;font-size:14.500px;color:#b8b8b8">Java</div>
<svg width="11" height="7" viewBox="0 0 11 7" style="left:601.500px;top:218px"><path d="M.7.800 5.500 5.700 10.300.800" fill="none" stroke="#a0a0a0" stroke-width="1.300"/></svg>
<svg width="8.500" height="10.500" viewBox="0 0 10 12" style="left:630.800px;top:215.300px"><rect x=".3" y="5" width="9.400" height="6.700" rx="1.200" fill="#ababab"/><path d="M2.300 5V3.500a2.700 2.700 0 0 1 5.400 0V5" fill="none" stroke="#ababab" stroke-width="1.500"/></svg>
<div class="t" style="transform:scaleX(0.9885);transform-origin:0 50%;left:646.500px;top:214px;font-size:14.500px;color:#b8b8b8">Auto</div>
<svg width="13" height="12" viewBox="0 0 13 12" style="left:1249.800px;top:215px"><path d="M0 .600h7M0 4.200h12.200M0 7.700h7M0 11.300h12.200" stroke="#b0b0b0" stroke-width="1.100"/></svg>
<svg width="11" height="14" viewBox="0 0 11 14" style="left:1278.300px;top:214px"><path d="M.8.800h9.400v12.200L5.500 9.500.8 13z" fill="none" stroke="#b0b0b0" stroke-width="1.400" stroke-linejoin="round"/></svg>
<svg width="16" height="13" viewBox="0 0 16 13" style="left:1304.200px;top:214.500px"><path d="M5.500.700C3.300.700 2.800 1.600 2.800 3.200v1.300C2.800 5.800 2 6.500.7 6.500 2 6.500 2.800 7.200 2.800 8.500v1.300c0 1.600.5 2.500 2.700 2.500M10.500.700c2.200 0 2.700.9 2.700 2.500v1.300c0 1.300.8 2 2.100 2-1.300 0-2.100.7-2.100 2v1.300c0 1.600-.5 2.500-2.700 2.500" fill="none" stroke="#b0b0b0" stroke-width="1.300"/></svg>
<svg width="13" height="13" viewBox="0 0 13 13" style="left:1333.200px;top:214.300px"><path d="M1 2v3.500h3.500" fill="none" stroke="#b0b0b0" stroke-width="1.400" stroke-linejoin="round"/><path d="M1.300 5.300A5.300 5.300 0 1 1 3 10.800" fill="none" stroke="#b0b0b0" stroke-width="1.400"/></svg>
<!-- indent guides -->
<div class="ig" style="left:615px;top:263px;height:234px;background:#6a6a6a"></div>
<div class="ig" style="left:644px;top:281px;height:216px"></div>
<div class="ig" style="left:672px;top:299px;height:18px"></div>
<div class="ig" style="left:672px;top:335px;height:18px"></div>
<div class="ig" style="left:672px;top:371px;height:18px"></div>
<div class="ig" style="left:672px;top:407px;height:90px"></div>
<div class="ig" style="left:701px;top:461px;height:36px"></div>
<div class="ln" style="top:246px">1</div>
<div class="code" style="top:246px"><span class="k">class</span> <span class="ty">Solution</span> <span class="b">{</span></div>
<div class="ln" style="top:264px">2</div>
<div class="code" style="top:264px">    <span class="k">public</span> <span class="ty">int</span> <span class="f">findPeakElement</span><span class="b">(</span><span class="ty">int</span>[] <span class="v">nums</span><span class="b">)</span> <span class="b">{</span></div>
<div class="ln" style="top:282px">3</div>
<div class="code" style="top:282px">        <span class="c">if</span><span class="b">(</span><span class="v">nums</span>.<span class="v">length</span>==<span class="n">1</span><span class="b">)</span><span class="b">{</span></div>
<div class="ln" style="top:300px">4</div>
<div class="code" style="top:300px">            <span class="c">return</span> <span class="n">0</span>;</div>
<div class="ln" style="top:318px">5</div>
<div class="code" style="top:318px">        <span class="b">}</span><span class="c">else</span> <span class="c">if</span> <span class="b">(</span> <span class="v">nums</span>[<span class="n">0</span>]&gt;<span class="v">nums</span>[<span class="n">1</span>]<span class="b">)</span><span class="b">{</span></div>
<div class="ln" style="top:336px">6</div>
<div class="code" style="top:336px">            <span class="c">return</span> <span class="n">0</span>;</div>
<div class="ln" style="top:354px">7</div>
<div class="code" style="top:354px">        <span class="b">}</span><span class="c">else</span> <span class="c">if</span> <span class="b">(</span> <span class="v">nums</span>[<span class="v">nums</span>.<span class="v">length</span>-<span class="n">1</span>]&gt;<span class="v">nums</span>[<span class="v">nums</span>.<span class="v">length</span>-<span class="n">2</span>]<span class="b">)</span><span class="b">{</span></div>
<div class="ln" style="top:372px">8</div>
<div class="code" style="top:372px">            <span class="c">return</span> <span class="v">nums</span>.<span class="v">length</span>-<span class="n">1</span>;</div>
<div class="ln" style="top:390px">9</div>
<div class="code" style="top:390px">        <span class="b">}</span><span class="c">else</span> <span class="b">{</span></div>
<div class="ln" style="top:408px">10</div>
<div class="ln" style="top:426px">11</div>
<div class="code" style="top:426px">            <span class="ty">int</span> <span class="v">start</span> = <span class="n">1</span> ;</div>
<div class="ln" style="top:444px">12</div>
<div class="code" style="top:444px">            <span class="ty">int</span> <span class="v">end</span> = <span class="v">nums</span>.<span class="v">length</span>-<span class="n">2</span>;</div>
<div class="ln" style="top:462px">13</div>
<div class="ln" style="top:480px">14</div>
<div class="code" style="top:480px">             <span class="c">while</span><span class="b">(</span><span class="v">start</span>&lt;=<span class="v">end</span><span class="b">)</span><span class="b">{</span></div>
<div class="t" style="transform:scaleX(0.9359);transform-origin:0 50%;left:571px;top:518.500px;font-size:12.500px;color:#9c9c9c">Saved to local</div>
<div class="t" style="transform:scaleX(0.9122);transform-origin:0 50%;left:1282.500px;top:518.500px;font-size:12.500px;color:#9c9c9c">Ln 28, Col 2</div>
<div class="abs" style="left:948px;top:545px;width:20px;height:2px;background:#333;border-radius:1px"></div>

<!-- ===== Bottom panel ===== -->
<div class="panel" style="left:559px;top:550px;width:797px;height:168px">
<div class="phead"></div>
<div class="abs" style="left:780px;top:36px;width:17px;height:132px;background:#424242"></div>
<div class="abs" style="left:782px;top:53px;width:13px;height:31px;background:#6b6b6b"></div>
<svg width="8" height="4" viewBox="0 0 8 4" style="left:784.500px;top:43px"><path d="M0 4 4 0 8 4z" fill="#a3a3a3"/></svg>
<svg width="8" height="5" viewBox="0 0 8 5" style="left:784.500px;top:156px"><path d="M0 0 4 5 8 0z" fill="#fff"/></svg>
<div class="abs" style="left:19.500px;top:96px;width:84px;height:29px;border-radius:8px;background:#3a3a3a"></div>
<div class="abs" style="left:19.500px;top:165px;width:740px;height:20px;border-radius:8px;background:#373737"></div>
</div>
<svg width="12" height="12" viewBox="0 0 12 12" style="left:573.500px;top:562px"><rect x=".6" y=".6" width="10.800" height="10.800" rx="1.800" fill="none" stroke="#1f6b36" stroke-width="1.200"/><path d="M3.300 6.200 5.300 8.200 8.800 4" fill="none" stroke="#1f6b36" stroke-width="1.200"/></svg>
<div class="t" style="transform:scaleX(0.8911);transform-origin:0 50%;left:591px;top:561px;font-size:14.500px;color:#b3b3b3">Testcase</div>
<div class="sep" style="left:651px;top:562px"></div>
<svg width="16" height="12" viewBox="0 0 16 12" style="left:659.500px;top:562px"><path d="M.8.800 6 6 .8 11.200M8 11.200h8" fill="none" stroke="#16b83a" stroke-width="1.500"/></svg>
<div class="t" style="transform:scaleX(0.8820);transform-origin:0 50%;left:680px;top:561px;font-size:14.500px;font-weight:700;color:#fff">Test Result</div>
<svg width="9" height="9" viewBox="0 0 9 9" style="left:755.500px;top:563.500px"><path d="M.5.500l8 8M8.500.500l-8 8" stroke="#b3b3b3" stroke-width="1.200"/></svg>
<div class="sep" style="left:774px;top:562px"></div>
<svg width="13" height="13" viewBox="0 0 13 13" style="left:784.500px;top:561.500px"><path d="M2.300.700h8.400a1.600 1.600 0 0 1 1.600 1.600v5.700l-4.300 4.300h-5.700a1.600 1.600 0 0 1-1.600-1.600v-8.400a1.600 1.600 0 0 1 1.600-1.600z" fill="none" stroke="#b8861e" stroke-width="1.400"/><path d="M12.300 8H9.600a1.600 1.600 0 0 0-1.600 1.600v2.700" fill="none" stroke="#b8861e" stroke-width="1.400"/></svg>
<div class="t" style="transform:scaleX(0.9954);transform-origin:0 50%;left:802.500px;top:561px;font-size:14.500px;color:#b3b3b3">Note</div>
<svg width="9" height="9" viewBox="0 0 9 9" style="left:841.500px;top:563.500px"><path d="M.5.500l8 8M8.500.500l-8 8" stroke="#b3b3b3" stroke-width="1.200"/></svg>
<svg width="14" height="3" viewBox="0 0 14 3" style="left:1331px;top:566px"><circle cx="1.500" cy="1.500" r="1.200" fill="#b0b0b0"/><circle cx="7" cy="1.500" r="1.200" fill="#b0b0b0"/><circle cx="12.500" cy="1.500" r="1.200" fill="#b0b0b0"/></svg>
<div class="t" style="transform:scaleX(0.9826);transform-origin:0 50%;left:579.500px;top:607px;font-size:20.500px;color:#2cbb5d;-webkit-text-stroke:.5px #2cbb5d">Accepted</div>
<div class="t" style="transform:scaleX(0.9360);transform-origin:0 50%;left:680px;top:610px;font-size:14.500px;color:#b0b0b0">Runtime: 0 ms</div>
<div class="abs" style="left:594.500px;top:658.500px;width:4px;height:4px;border-radius:2px;background:#2cbb5d"></div>
<div class="t" style="transform:scaleX(0.8553);transform-origin:0 50%;left:605px;top:653.500px;font-size:14.500px;font-weight:700;color:#fff">Case 1</div>
<div class="abs" style="left:685.500px;top:658.500px;width:4px;height:4px;border-radius:2px;background:#2cbb5d"></div>
<div class="t" style="transform:scaleX(0.8767);transform-origin:0 50%;left:696px;top:653.500px;font-size:14.500px;font-weight:700;color:#b8b8b8">Case 2</div>
<div class="t" style="transform:scaleX(0.9657);transform-origin:0 50%;left:579px;top:694px;font-size:12.500px;font-weight:700;color:#a8a8a8">Input</div>

<!-- ===== Taskbar ===== -->
<div class="abs" style="left:0;top:728px;width:1366px;height:40px;background:#0d381b;font-family:'Liberation Sans',sans-serif">
<svg width="17" height="17" viewBox="0 0 17 17" style="left:15.500px;top:11.500px"><path d="M0 2.400 7 1.400V8H0zM8 1.250 17 0v8H8zM0 9h7v6.600L0 14.600zM8 9h9v8l-9-1.250z" fill="#fff"/></svg>
<div class="abs" style="left:48px;top:0;width:288px;height:40px;background:#335443;border:1px solid #6e8a7a;border-bottom:0"></div>
<svg width="18" height="18" viewBox="0 0 18 18" style="left:59px;top:11px"><circle cx="11.300" cy="6.600" r="5.200" fill="none" stroke="#fff" stroke-width="1.300"/><path d="M7.600 10.300 1 17" stroke="#fff" stroke-width="1.300"/></svg>
<div class="t" style="transform:scaleX(0.9270);transform-origin:0 50%;left:88.500px;top:12.500px;font-size:15.500px;color:#fff">Type here to search</div>
<!-- search highlight art -->
<svg width="76" height="38" viewBox="0 0 76 38" style="left:260px;top:2px">
<path d="M2 38c0-9 5-12 12-13l6-2 8 1c8 1 14 5 15 14z" fill="#8a6b4f"/>
<path d="M14 25l7 4 7-4 2 13H12z" fill="#a78463"/>
<ellipse cx="21" cy="13" rx="7.500" ry="9.500" fill="#d9b497"/>
<path d="M13 10c0-7 4-9.500 8.500-9.500S29 4 29 10c-2-3-4-4.500-7.500-4.500S15 7 13 10z" fill="#e4e4e6"/>
<path d="M15 18c2 5 10 5 12 0l-1 5c-3 3-7 3-10 0z" fill="#ececee"/>
<path d="M16 27l5 2.500L16 32zM26 27l-5 2.500L26 32z" fill="#3f5fa8"/>
<g transform="translate(5 0)"><path d="M55 4h4v11l5 9a4.500 4.500 0 0 1-4 6.500h-6A4.500 4.500 0 0 1 50 24l5-9z" fill="#7fa3d6"/>
<circle cx="57" cy="24" r="7" fill="#3fc23a"/>
<path d="M52 30l-3 8M62 30l3 8M57 31v7" stroke="#8b8f96" stroke-width="1.500"/></g>
<rect x="47" y="22" width="7" height="12" rx="2" fill="#e8793a"/>
<rect x="47" y="20" width="7" height="3" rx="1" fill="#f2b48a"/>
<path d="M40 38h36v-3H44z" fill="#d8cfc2"/>
</svg>
<!-- task view -->
<svg width="17" height="16" viewBox="0 0 17 16" style="left:351.500px;top:12px"><g fill="none" stroke="#fff" stroke-width="1.200"><rect x="1.600" y="3.600" width="9.800" height="8.800"/><path d="M.6 1.500V.600h11.800v.9M.6 14.500v.9h11.800v-.9"/></g><rect x="14.300" y="1.800" width="1.800" height="2.700" fill="#fff"/><rect x="14.300" y="6" width="1.800" height="9" fill="#fff"/></svg>
<!-- explorer -->
<svg width="23" height="19" viewBox="0 0 23 19" style="left:399px;top:10.500px"><path d="M0 1.500A1.500 1.500 0 0 1 1.500 0H8l2 2.500h11.500A1.500 1.500 0 0 1 23 4v3H0z" fill="#e9a33b"/><rect x="0" y="4.200" width="23" height="14.300" rx="1" fill="#f9d56a"/><path d="M0 17.500h23v1H0z" fill="#e4b648"/><path d="M6.500 10.500h10v8h-2.700v-4.300H9.200v4.300H6.500z" fill="#3f8fe0"/><rect x="6.500" y="10.500" width="10" height="2.200" fill="#2f7bd0"/></svg>
<!-- mail -->
<svg width="26" height="23" viewBox="0 0 26 23" style="left:447px;top:8.500px"><path d="M13 0 26 8.500V22a1 1 0 0 1-1 1H1a1 1 0 0 1-1-1V8.500z" fill="#1473c8"/><path d="M2.500 7.500h21V16l-10.500 6L2.500 16z" fill="#fff"/><path d="M0 9l13 8.300L26 9v13a1 1 0 0 1-1 1H1a1 1 0 0 1-1-1z" fill="#2d9be8"/><path d="M0 22.500 13 17.300l13 5.200a1 1 0 0 1-1 .5H1a1 1 0 0 1-1-.5z" fill="#1d86d8"/></svg>
<!-- sticky -->
<svg width="23" height="23" viewBox="0 0 23 23" style="left:497px;top:9px"><rect width="23" height="23" rx="1.500" fill="#ffd400"/><path d="M0 12h23v9.500a1.500 1.500 0 0 1-1.500 1.500h-20A1.500 1.500 0 0 1 0 21.500z" fill="#f7c000"/><path d="M23 11.500V23H11.500z" fill="#4a4433"/></svg>
<div class="abs" style="left:489px;top:37.500px;width:40px;height:2.500px;background:#a5efc7"></div>
<!-- chrome -->
<div class="abs" style="left:534px;top:0;width:48px;height:40px;background:#0e8240"></div>
<div class="abs" style="left:534px;top:37.500px;width:48px;height:2.500px;background:#a5efc7"></div>
<svg width="24" height="24" viewBox="0 0 24 24" style="left:546px;top:8px"><circle cx="12" cy="12" r="12" fill="#4caf50"/><path d="M12 12 1.600 6A12 12 0 0 1 22.400 6z" fill="#e8453c"/><path d="M12 12 22.400 6A12 12 0 0 1 12 24z" fill="#fbc02d"/><path d="M12 12 1.600 6A12 12 0 0 0 12 24l5-8.500z" fill="#43a047"/><path d="M12 6.500h10.200A12 12 0 0 0 1.600 6l5.100 8.800z" fill="#e8453c"/><circle cx="12" cy="12" r="5.500" fill="#fff"/><circle cx="12" cy="12" r="4.300" fill="#4a8af4"/></svg>
<div class="abs" style="left:556.500px;top:18.500px;width:15.500px;height:15.500px;border-radius:8px;background:#d9cfae;overflow:hidden;border:.5px solid #e8e2cc"><div class="abs" style="left:4px;top:2px;width:6px;height:7px;border-radius:3px;background:#b07a5a"></div><div class="abs" style="left:4px;top:1px;width:6px;height:3px;border-radius:3px 3px 0 0;background:#3a2a22"></div><div class="abs" style="left:2px;top:9px;width:10px;height:7px;border-radius:4px 4px 0 0;background:#f1efea"></div></div>
<!-- vscode -->
<svg width="25" height="25" viewBox="0 0 25 25" style="left:594px;top:8px"><path d="M18.200.300 24.500 3.200v18.600l-6.300 2.900L6.300 13.700 2.300 16.800.500 15.900V9.100l1.800-.9 4 3.100zM18.300 6.800 11 12.500l7.300 5.700z" fill="#1f9cf0" fill-rule="evenodd"/><path d="M18.200.300 24.500 3.200v18.600l-6.300 2.900z" fill="#0f7fd0" opacity=".55"/></svg>
<div class="abs" style="left:586.500px;top:37.500px;width:40px;height:2.500px;background:#a5efc7"></div>
<!-- weather -->
<svg width="24" height="20" viewBox="0 0 24 20" style="left:1052px;top:11.500px"><circle cx="13.500" cy="11" r="8.800" fill="#ee7d17"/><path d="M5.500 14.500a8.800 8.800 0 0 0 16 0z" fill="#f6a12a"/><path d="M4 2.800h8.500M1 6.200h15M0 9.600h19M1.500 13h13" stroke="#f7cf4e" stroke-width="1.700"/><circle cx="18" cy="4.800" r="4.800" fill="#d92b2b"/></svg>
<div class="t" style="left:1068px;top:12px;font-size:8px;color:#fff">1</div>
<div class="t" style="transform:scaleX(0.8372);transform-origin:0 50%;left:1084px;top:12.500px;font-size:15.500px;color:#fff">27°C</div>
<div class="t" style="transform:scaleX(0.8601);transform-origin:0 50%;left:1122.500px;top:12.500px;font-size:15.500px;color:#fff">Smoke</div>
<svg width="13" height="8" viewBox="0 0 13 8" style="left:1188.500px;top:16px"><path d="M.7 7.300 6.500 1.200l5.800 6.100" fill="none" stroke="#fff" stroke-width="1.300"/></svg>
<div class="t" style="transform:scaleX(0.8649);transform-origin:0 50%;left:1213.500px;top:14.500px;font-size:12px;color:#fff">ENG</div>
<div class="t" style="transform:scaleX(0.9157);transform-origin:0 50%;left:1263.500px;top:5px;font-size:12px;color:#fff">23:05</div>
<div class="t" style="transform:scaleX(0.9366);transform-origin:0 50%;left:1249.500px;top:22.500px;font-size:12px;color:#fff">27-12-2023</div>
<svg width="17" height="15" viewBox="0 0 17 15" style="left:1325px;top:12px"><path d="M0 0h16v11.500H6.500L3 15v-3.500H0z" fill="#fff"/><path d="M3 3.200h10M3 5.700h10M3 8.200h10" stroke="#0d381b" stroke-width="1"/></svg>
<div class="abs" style="left:1332px;top:19px;width:16px;height:16px;border-radius:8px;background:#15703c"></div>
<div class="t" style="left:1336.500px;top:21.500px;font-size:11.500px;color:#fff;font-weight:700">6</div>
<div class="abs" style="left:1360px;top:0;width:1px;height:40px;background:#5a7464"></div>
</div>




</body>
</html>
